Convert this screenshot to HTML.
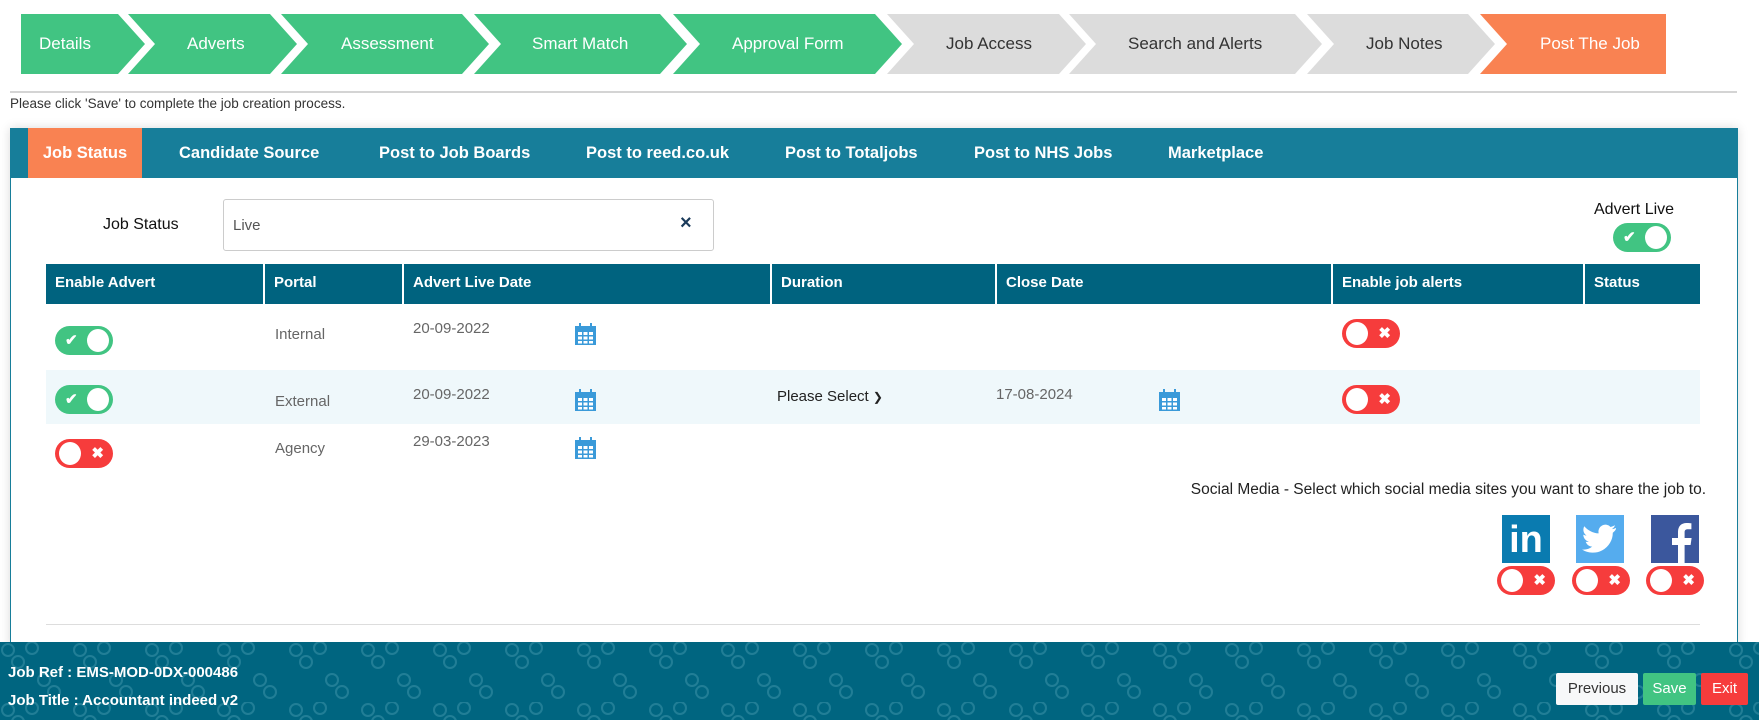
<!DOCTYPE html>
<html><head><meta charset="utf-8"><style>
*{margin:0;padding:0;box-sizing:border-box}
body{width:1759px;height:720px;overflow:hidden;background:#fff;font-family:"Liberation Sans",sans-serif;position:relative}
.a{position:absolute}
.st{position:absolute;top:14px;height:60px;color:#fff;font-size:17px;line-height:60px;white-space:nowrap}
.g{background:#41c482}.gr{background:#dcdcdc;color:#333}.o{background:#f98252}
.tab{position:absolute;top:128px;height:50px;line-height:50px;color:#fff;font-weight:bold;font-size:16.5px;white-space:nowrap}
.th{position:absolute;top:264px;height:40px;line-height:38px;color:#fff;font-weight:bold;font-size:15px;background:#00637f;padding-left:9px}
.tog{position:absolute;width:58px;height:29px;border-radius:15px}
.tog.on{background:#41c482}.tog.off{background:#f63c3c}
.tog .c{position:absolute;top:3px;width:22px;height:23px;border-radius:50%;background:#fff}
.tog.on .c{right:4px}.tog.off .c{left:4px}
.tog .m{position:absolute;top:0;line-height:29px;color:#fff;font-weight:bold;font-size:15px}
.tog.on .m{left:10px}.tog.off .m{right:9px}
.txt{position:absolute;font-size:15px;color:#666;white-space:nowrap}
.cal{position:absolute;width:21px;height:22px}
.btn{position:absolute;top:673px;height:32px;line-height:32px;text-align:center;font-size:15px;border-radius:2px}
</style></head><body>
<div class="st g" style="left:21px;width:124px;padding-left:18px;clip-path:polygon(0 0,97px 0,124px 30px,97px 60px,0 60px)">Details</div>
<div class="st g" style="left:128px;width:169px;padding-left:59px;clip-path:polygon(0 0,142px 0,169px 30px,142px 60px,0 60px,27px 30px)">Adverts</div>
<div class="st g" style="left:281px;width:208px;padding-left:60px;clip-path:polygon(0 0,181px 0,208px 30px,181px 60px,0 60px,27px 30px)">Assessment</div>
<div class="st g" style="left:474px;width:213px;padding-left:58px;clip-path:polygon(0 0,186px 0,213px 30px,186px 60px,0 60px,27px 30px)">Smart Match</div>
<div class="st g" style="left:673px;width:229px;padding-left:59px;clip-path:polygon(0 0,202px 0,229px 30px,202px 60px,0 60px,27px 30px)">Approval Form</div>
<div class="st gr" style="left:887px;width:199px;padding-left:59px;clip-path:polygon(0 0,172px 0,199px 30px,172px 60px,0 60px,27px 30px)">Job Access</div>
<div class="st gr" style="left:1069px;width:253px;padding-left:59px;clip-path:polygon(0 0,226px 0,253px 30px,226px 60px,0 60px,27px 30px)">Search and Alerts</div>
<div class="st gr" style="left:1307px;width:188px;padding-left:59px;clip-path:polygon(0 0,161px 0,188px 30px,161px 60px,0 60px,27px 30px)">Job Notes</div>
<div class="st o" style="left:1480px;width:186px;padding-left:60px;clip-path:polygon(0 0,186px 0,186px 60px,0 60px,27px 30px)">Post The Job</div>
<div class="a" style="left:10px;top:91px;width:1727px;height:2px;background:#d4d4d4"></div>
<div class="a" style="left:10px;top:96px;font-size:13.5px;color:#333">Please click 'Save' to complete the job creation process.</div>
<div class="a" style="left:10px;top:128px;width:1728px;height:520px;border:1px solid #177e9a;box-shadow:0 0 10px rgba(0,0,0,.15)"></div>
<div class="a" style="left:10px;top:128px;width:1728px;height:50px;background:#177e9a"></div>
<div class="tab" style="left:28px;width:114px;background:#f98252;text-align:center">Job Status</div>
<div class="tab" style="left:179px">Candidate Source</div>
<div class="tab" style="left:379px">Post to Job Boards</div>
<div class="tab" style="left:586px">Post to reed.co.uk</div>
<div class="tab" style="left:785px">Post to Totaljobs</div>
<div class="tab" style="left:974px">Post to NHS Jobs</div>
<div class="tab" style="left:1168px">Marketplace</div>
<div class="a" style="left:103px;top:216px;font-size:16px;color:#111">Job Status</div>
<div class="a" style="left:223px;top:199px;width:491px;height:52px;border:1px solid #ccc;border-radius:3px"></div>
<div class="a" style="left:233px;top:217px;font-size:15px;color:#555">Live</div>
<div class="a" style="left:680px;top:212px;font-size:20px;font-weight:bold;color:#1a3a5a">×</div>
<div class="a" style="left:1594px;top:201px;font-size:16px;color:#111">Advert Live</div>
<div class="tog on" style="left:1613px;top:223px"><div class="c"></div><div class="m">✔</div></div>
<div class="th" style="left:46px;width:217px">Enable Advert</div>
<div class="th" style="left:265px;width:137px">Portal</div>
<div class="th" style="left:404px;width:366px">Advert Live Date</div>
<div class="th" style="left:772px;width:223px">Duration</div>
<div class="th" style="left:997px;width:334px">Close Date</div>
<div class="th" style="left:1333px;width:250px">Enable job alerts</div>
<div class="th" style="left:1585px;width:115px">Status</div>
<div class="a" style="left:46px;top:370px;width:1654px;height:54px;background:#eff8fb"></div>
<div class="tog on" style="left:55px;top:326px"><div class="c"></div><div class="m">✔</div></div>
<div class="tog on" style="left:55px;top:385px"><div class="c"></div><div class="m">✔</div></div>
<div class="tog off" style="left:55px;top:439px"><div class="c"></div><div class="m">✖</div></div>
<div class="txt" style="left:275px;top:326px">Internal</div>
<div class="txt" style="left:275px;top:393px">External</div>
<div class="txt" style="left:275px;top:440px">Agency</div>
<div class="txt" style="left:413px;top:320px">20-09-2022</div>
<div class="txt" style="left:413px;top:386px">20-09-2022</div>
<div class="txt" style="left:413px;top:433px">29-03-2023</div>
<div class="txt" style="left:996px;top:386px">17-08-2024</div>
<div class="a" style="left:777px;top:388px;font-size:15px;color:#222">Please Select <span style="font-size:12px">❯</span></div>
<svg width="0" height="0" style="position:absolute"><defs><symbol id="cal" viewBox="0 0 21 22"><rect x="0" y="3" width="21" height="19" fill="#3a9ad9"/><rect x="4" y="0" width="2" height="5" fill="#3a9ad9"/><rect x="15" y="0" width="2" height="5" fill="#3a9ad9"/><g fill="#fff"><rect x="3" y="9" width="4" height="3"/><rect x="8.5" y="9" width="4" height="3"/><rect x="14" y="9" width="4" height="3"/><rect x="3" y="13.5" width="4" height="3"/><rect x="8.5" y="13.5" width="4" height="3"/><rect x="14" y="13.5" width="4" height="3"/><rect x="3" y="18" width="4" height="2.5"/><rect x="8.5" y="18" width="4" height="2.5"/><rect x="14" y="18" width="4" height="2.5"/></g></symbol></defs></svg>
<svg class="cal" style="left:575px;top:323px"><use href="#cal"/></svg>
<svg class="cal" style="left:575px;top:389px"><use href="#cal"/></svg>
<svg class="cal" style="left:575px;top:437px"><use href="#cal"/></svg>
<svg class="cal" style="left:1159px;top:389px"><use href="#cal"/></svg>
<div class="tog off" style="left:1342px;top:319px"><div class="c"></div><div class="m">✖</div></div>
<div class="tog off" style="left:1342px;top:385px"><div class="c"></div><div class="m">✖</div></div>
<div class="a" style="right:53px;top:481px;font-size:15.5px;color:#222">Social Media - Select which social media sites you want to share the job to.</div>
<div class="a" style="left:1502px;top:515px;width:48px;height:48px;background:#0a7bb0;color:#fff;font-weight:bold;font-size:38px;line-height:50px;text-align:center">in</div>
<svg class="a" style="left:1576px;top:515px" width="48" height="48" viewBox="0 0 48 48"><rect width="48" height="48" fill="#55acee"/><path d="M40 13c-1.3.6-2.6 1-4 1.1 1.4-.9 2.5-2.2 3-3.8-1.4.8-2.9 1.4-4.4 1.7a7 7 0 0 0-12 6.4C16.9 18.1 11.8 15.4 8.3 11.2c-1.8 3.2-.9 7.2 2.2 9.3-1.1 0-2.2-.3-3.2-.9 0 3.4 2.4 6.3 5.6 7-1 .3-2.1.3-3.2.1.9 2.8 3.5 4.8 6.5 4.9A14 14 0 0 1 6 34.5 20 20 0 0 0 36.8 17.7c1.4-1 2.5-2.2 3.2-3.7z" fill="#fff"/></svg>
<svg class="a" style="left:1651px;top:515px" width="48" height="48" viewBox="0 0 48 48"><rect width="48" height="48" fill="#3b579d"/><path d="M27 48V30h-6v-7h6v-6c0-6 3.5-9 8.5-9 2.3 0 4.300.2 4.900.3v6h-3.500c-2.700 0-3.300 1.300-3.300 3.200V23h7l-1 7h-6v18z" fill="#fff"/></svg>
<div class="tog off" style="left:1497px;top:566px"><div class="c"></div><div class="m">✖</div></div>
<div class="tog off" style="left:1572px;top:566px"><div class="c"></div><div class="m">✖</div></div>
<div class="tog off" style="left:1646px;top:566px"><div class="c"></div><div class="m">✖</div></div>
<div class="a" style="left:46px;top:624px;width:1654px;height:1px;background:#ddd"></div>
<svg class="a" style="left:0;top:642px" width="1759" height="78"><defs><pattern id="p" width="72" height="60" patternUnits="userSpaceOnUse"><g fill="none" stroke="rgba(120,190,210,.28)" stroke-width="2"><circle cx="8" cy="8" r="6"/><circle cx="18" cy="20" r="6"/><circle cx="44" cy="38" r="6"/><circle cx="54" cy="50" r="6"/><circle cx="32" cy="6" r="6"/></g></pattern></defs><rect width="1759" height="78" fill="#006580"/><rect width="1759" height="78" fill="url(#p)"/></svg>
<div class="a" style="left:8px;top:664px;color:#fff;font-weight:bold;font-size:15px">Job Ref : EMS-MOD-0DX-000486</div>
<div class="a" style="left:8px;top:692px;color:#fff;font-weight:bold;font-size:15px">Job Title : Accountant indeed v2</div>
<div class="btn" style="left:1556px;width:82px;background:#f7f8f9;color:#333">Previous</div>
<div class="btn" style="left:1643px;width:53px;background:#41c482;color:#fff">Save</div>
<div class="btn" style="left:1701px;width:47px;background:#f63c3c;color:#fff">Exit</div>
</body></html>
